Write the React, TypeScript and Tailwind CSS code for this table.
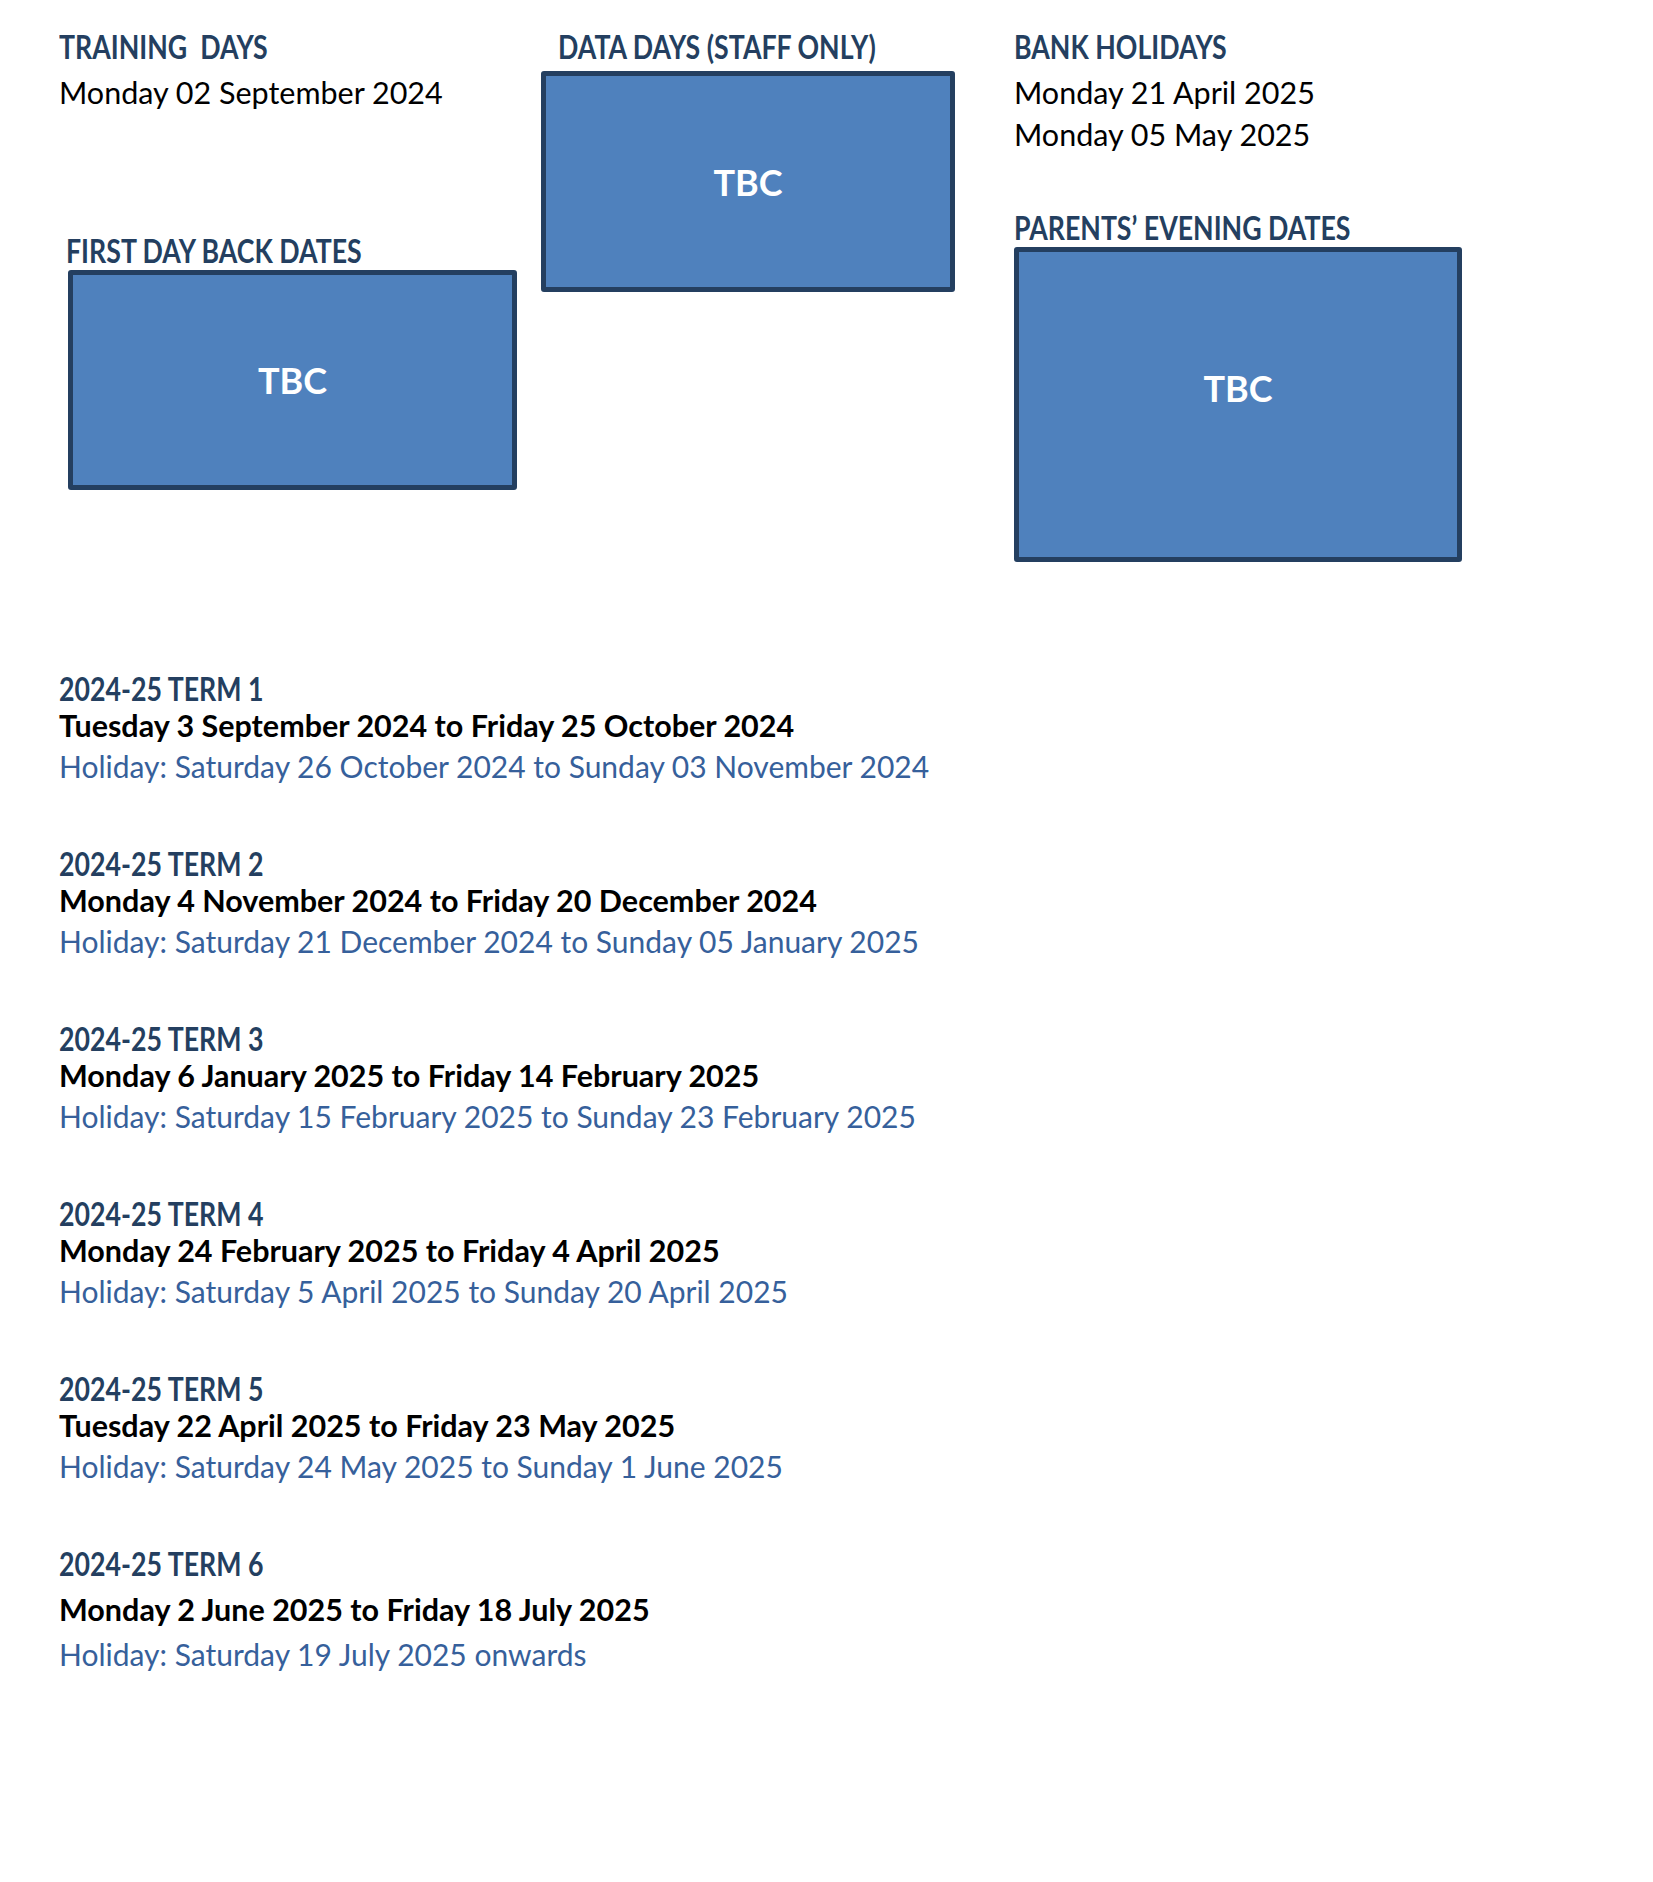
const terms = [
  {
    n: 1,
    dates: "Tuesday 3 September 2024 to Friday 25 October 2024",
    holiday: "Holiday: Saturday 26 October 2024 to Sunday 03 November 2024",
  },
  {
    n: 2,
    dates: "Monday 4 November 2024 to Friday 20 December 2024",
    holiday: "Holiday: Saturday 21 December 2024 to Sunday 05 January 2025",
  },
  {
    n: 3,
    dates: "Monday 6 January 2025 to Friday 14 February 2025",
    holiday: "Holiday: Saturday 15 February 2025 to Sunday 23 February 2025",
  },
  {
    n: 4,
    dates: "Monday 24 February 2025 to Friday 4 April 2025",
    holiday: "Holiday: Saturday 5 April 2025 to Sunday 20 April 2025",
  },
  {
    n: 5,
    dates: "Tuesday 22 April 2025 to Friday 23 May 2025",
    holiday: "Holiday: Saturday 24 May 2025 to Sunday 1 June 2025",
  },
  {
    n: 6,
    dates: "Monday 2 June 2025 to Friday 18 July 2025",
    holiday: "Holiday: Saturday 19 July 2025 onwards",
  },
];

function Heading({ children, className = "" }: { children: React.ReactNode; className?: string }) {
  return (
    <h2
      className={`block origin-left scale-x-[0.835] whitespace-pre text-[32px] font-bold leading-[36px] text-[#243f60] ${className}`}
    >
      {children}
    </h2>
  );
}

function TbcBox({ className = "" }: { className?: string }) {
  return (
    <div
      className={`flex items-center justify-center rounded-[3px] border-[5px] border-[#243f60] bg-[#4f81bd] text-[36px] font-bold text-white ${className}`}
    >
      TBC
    </div>
  );
}

export default function App() {
  return (
    <div className="min-h-screen bg-white pl-[59px] pt-[29px] font-['Lato',sans-serif] text-black">
      <div className="flex items-start">
        {/* column 1 */}
        <div className="flex w-[482px] flex-col">
          <Heading>{"TRAINING  DAYS"}</Heading>
          <p className="mt-[6px] text-[30.5px] leading-[42px]">Monday 02 September 2024</p>
          <Heading className="ml-[7px] mt-[120px]">FIRST DAY BACK DATES</Heading>
          <TbcBox className="ml-[9px] mt-[1px] h-[220px] w-[449px]" />
        </div>

        {/* column 2 */}
        <div className="flex w-[473px] flex-col">
          <Heading className="ml-[17px]">DATA DAYS (STAFF ONLY)</Heading>
          <TbcBox className="mt-[6px] h-[221px] w-[414px]" />
        </div>

        {/* column 3 */}
        <div className="flex flex-col">
          <Heading>BANK HOLIDAYS</Heading>
          <p className="mt-[6px] text-[30.5px] leading-[42px]">Monday 21 April 2025</p>
          <p className="text-[30.5px] leading-[42px]">Monday 05 May 2025</p>
          <Heading className="mt-[55px]">PARENTS’ EVENING DATES</Heading>
          <TbcBox className="mt-[1px] h-[315px] w-[448px] pb-[34px]" />
        </div>
      </div>

      <div className="mt-[111px] flex flex-col gap-[61px]">
        {terms.map((t) => (
          <section key={t.n} className="flex flex-col">
            <h3 className="block origin-left scale-x-[0.835] text-[32px] font-bold leading-[32px] text-[#243f60]">
              2024-25 TERM {t.n}
            </h3>
            <p className={`text-[30.5px] font-bold leading-[40px] ${t.n === 6 ? "mt-[9px]" : ""}`}>{t.dates}</p>
            <p className={`text-[30px] leading-[42px] text-[#36609b] ${t.n === 6 ? "mt-[4px]" : ""}`}>
              {t.holiday}
            </p>
          </section>
        ))}
      </div>
    </div>
  );
}
